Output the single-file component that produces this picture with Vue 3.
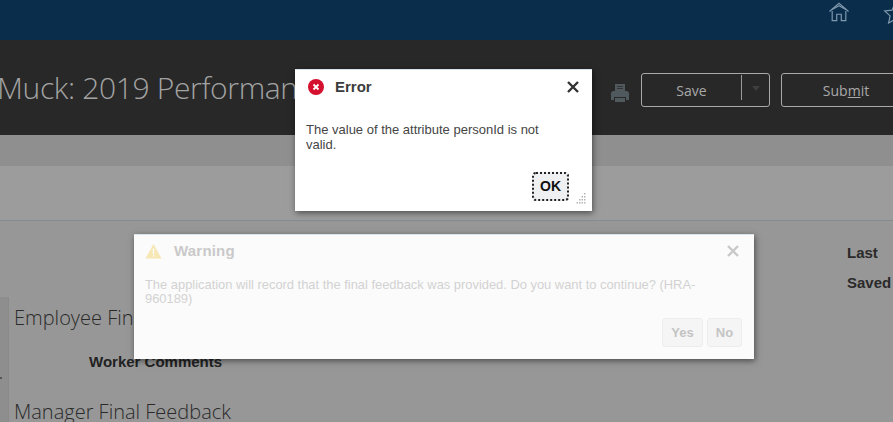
<script setup>
const title = 'Muck: 2019 Performance'
</script>

<template>
  <div class="page">
    <header class="topbar">
      <svg class="home" width="22" height="20" viewBox="0 0 24 22" fill="none" stroke="#7f98ad" stroke-width="1.3">
        <path d="M1.5 10.5 12 1.500l10.500 9" />
        <path d="M4 8.500 12 4l8 4.500" />
        <path d="M4.500 10v10.500h5v-7h5v7h5V10" />
      </svg>
      <svg class="star" width="24" height="22" viewBox="0 0 24 22" fill="none" stroke="#7f98ad" stroke-width="1.2">
        <path d="M12 1.500l3 6.700 7.300.8-5.400 4.900 1.500 7.100L12 17.400 5.600 21l1.500-7.100L1.700 9l7.300-.8z" />
      </svg>
    </header>

    <section class="titlebar">
      <h1 class="title">{{ title }}</h1>
      <div class="actions">
        <svg class="printer" width="20" height="20" viewBox="0 0 20 20" fill="#50595d">
          <path d="M5 1h10v7H5z" />
          <path d="M1 9.500 3 8h14l2 1.500V17h-3v-3H4v3H1z" />
          <path d="M5 15h10v4H5z" />
          <path d="M7 3h6v.8H7zm0 2h6v.8H7z" fill="#2a2a2a" />
        </svg>
        <div class="btn save">
          <span class="save-label">Save</span>
          <span class="divider"></span>
          <span class="caret"></span>
        </div>
        <div class="btn submit"><span>Sub<u>m</u>it</span></div>
      </div>
    </section>

    <div class="band"></div>
    <div class="band2"></div>

    <main class="content">
      <div class="side-tab"><span class="tick"></span></div>
      <div class="sections">
        <h2 class="section first">Employee Final</h2>
        <h3 class="sub">Worker Comments</h3>
        <h2 class="section second">Manager Final Feedback</h2>
      </div>
      <aside class="saved">
        <div>Last</div>
        <div>Saved</div>
      </aside>
    </main>

    <div class="dialog warning">
      <div class="dlg-head">
        <svg width="17" height="16" viewBox="0 0 17 16">
          <path d="M8.500 1 16.500 15.500H.5z" fill="#f6e7b4" />
          <path d="M7.800 5.500h1.400v5.500H7.800zm0 6.500h1.400v1.500H7.800z" fill="#fbfbfb" />
        </svg>
        <span class="dlg-title">Warning</span>
        <svg class="close" width="12" height="12" viewBox="0 0 12 12" stroke="#c9c9c9" stroke-width="2.400">
          <path d="M1 1l10 10M11 1 1 11" />
        </svg>
      </div>
      <p class="msg">The application will record that the final feedback was provided. Do you want to continue? (HRA-960189)</p>
      <div class="dlg-foot">
        <span class="ghost yes">Yes</span>
        <span class="ghost no">No</span>
      </div>
    </div>

    <div class="dialog error">
      <div class="dlg-head">
        <svg width="16" height="16" viewBox="0 0 16 16">
          <circle cx="8" cy="8" r="8" fill="#d5102f" />
          <path d="M5.500 5.500l5 5m0-5-5 5" stroke="#fff" stroke-width="1.800" />
        </svg>
        <span class="dlg-title">Error</span>
        <svg class="close" width="12" height="12" viewBox="0 0 12 12" stroke="#333" stroke-width="2.400">
          <path d="M1 1l10 10M11 1 1 11" />
        </svg>
      </div>
      <p class="msg">The value of the attribute personId is not valid.</p>
      <div class="dlg-foot">
        <span class="ok">OK</span>
      </div>
      <svg class="grip" width="11" height="11" viewBox="0 0 11 11" fill="#b5b5b5">
        <path d="M9 0h1.500v1.500H9zM9 3h1.500v1.500H9zM6.500 3H8v1.500H6.500zM9 6h1.500v1.500H9zM6.500 6H8v1.500H6.500zM4 6h1.500v1.500H4zM9 9h1.500v1.500H9zM6.500 9H8v1.500H6.500zM4 9h1.500v1.500H4zM1.500 9H3v1.500H1.500z" />
      </svg>
    </div>
  </div>
</template>

<style>
html, body { margin: 0; padding: 0; background: #979797; }
</style>

<style scoped>
.page {
  position: relative;
  width: 893px;
  height: 422px;
  overflow: hidden;
  background: #979797;
  font-family: "Liberation Sans", Arial, sans-serif;
  color: #222;
}
.topbar {
  box-sizing: border-box;
  height: 40px;
  background: #0a2d4c;
  display: flex;
  justify-content: flex-end;
  align-items: flex-start;
  gap: 33px;
  padding: 2px 0 0 0;
  margin-right: -14px;
}
.titlebar {
  box-sizing: border-box;
  height: 95px;
  background: #282828;
  display: flex;
  align-items: flex-start;
  overflow: hidden;
}
.title {
  flex: none;
  width: 613px;
  margin: 0 0 0 -3px;
  padding-top: 26px;
  font: 300 30px/44px "Open Sans", sans-serif;
  letter-spacing: -0.35px;
  color: #a3a3a3;
  white-space: nowrap;
  overflow: hidden;
}
.actions {
  flex: none;
  display: flex;
  align-items: flex-start;
  padding-top: 33px;
}
.printer { margin: 10px 11px 0 0; }
.btn {
  box-sizing: border-box;
  height: 34px;
  border: 1.500px solid #a9a9a9;
  border-radius: 3px;
  color: #a8a8a8;
  font: 400 14px/33px "Open Sans", sans-serif;
  flex: none;
}
.save {
  width: 129px;
  display: flex;
  position: relative;
}
.save-label { width: 99px; text-align: center; }
.divider {
  width: 1px;
  height: 25px;
  margin-top: 1px;
  background: #9a9a9a;
}
.caret {
  margin: 12px 0 0 10px;
  width: 0;
  height: 0;
  border: 4px solid transparent;
  border-top: 5px solid #3f3f3f;
}
.submit {
  width: 130px;
  margin-left: 11px;
  text-align: center;
}
.band {
  height: 31px;
  background: #8f8f8f;
}
.band2 {
  height: 54px;
  background: #9c9c9c;
  border-bottom: 1px solid #868b90;
}
.content {
  display: flex;
  position: relative;
  height: 201px;
}
.side-tab {
  position: absolute;
  left: 0;
  top: 76px;
  width: 8px;
  height: 130px;
  background: #8e8e8e;
  border-right: 1px solid #8a8a8a;
}
.tick {
  position: absolute;
  left: 0;
  top: 80px;
  width: 2px;
  height: 2px;
  background: #555;
}
.sections {
  flex: 1;
  padding: 83px 0 0 14px;
}
.section {
  margin: 0;
  font: 300 20px/28px "Open Sans", sans-serif;
  color: #2a2a2a;
}
.sub {
  margin: 21px 0 0 75px;
  font: 700 15px/18px "Liberation Sans", sans-serif;
  color: #222;
}
.second { margin-top: 27px; }
.saved {
  width: 46px;
  padding-top: 17px;
  font: 700 15px/30px "Liberation Sans", sans-serif;
  color: #2a2a2a;
}
.dialog {
  position: absolute;
  box-sizing: border-box;
  box-shadow: 1px 2px 6px rgba(0, 0, 0, 0.5);
  display: flex;
  flex-direction: column;
  border-top: 1px solid #d9e4ee;
}
.error {
  left: 295px;
  top: 69px;
  width: 297px;
  height: 142px;
  background: #fff;
  padding: 8px 13px 0 11px;
}
.warning {
  left: 134px;
  top: 234px;
  width: 620px;
  height: 125px;
  background: #fbfbfb;
  padding: 7px 15px 0 11px;
}
.dlg-head {
  display: flex;
  align-items: center;
  height: 18px;
}
.error .dlg-head { padding-left: 2px; }
.warning .dlg-head { height: 17px; }
.dlg-title {
  font: 700 15px/18px "Liberation Sans", sans-serif;
  margin-left: 11px;
  color: #3c3c3c;
  flex: 1;
}
.warning .dlg-title {
  color: #c9c9c9;
  letter-spacing: 0.2px;
  margin-left: 12px;
}
.close { flex: none; }
.msg {
  margin: 0;
  font: 400 13px/15px "Liberation Sans", sans-serif;
  color: #454545;
}
.error .msg { padding: 26px 30px 0 0; }
.warning .msg {
  padding: 19px 30px 0 0;
  font-size: 12.900px;
  line-height: 14px;
  color: #d2d2d2;
}
.dlg-foot {
  margin-top: auto;
  display: flex;
  justify-content: flex-end;
  gap: 4px;
}
.warning .dlg-foot { margin-right: -3px; }
.ok {
  box-sizing: border-box;
  width: 37px;
  height: 29px;
  margin: 0 10px 10px 0;
  border: 2px dotted #222;
  border-radius: 4px;
  background: #eef0f2;
  font: 700 14px/25px "Liberation Sans", sans-serif;
  text-align: center;
  color: #111;
}
.ghost {
  box-sizing: border-box;
  height: 29px;
  margin-bottom: 12px;
  border: 1px solid #ededed;
  border-radius: 3px;
  background: #f5f5f5;
  font: 700 13px/27px "Liberation Sans", sans-serif;
  text-align: center;
  color: #c4c4c4;
}
.yes { width: 41px; }
.no { width: 35px; }
.grip {
  position: absolute;
  right: 6px;
  bottom: 7px;
}
</style>
